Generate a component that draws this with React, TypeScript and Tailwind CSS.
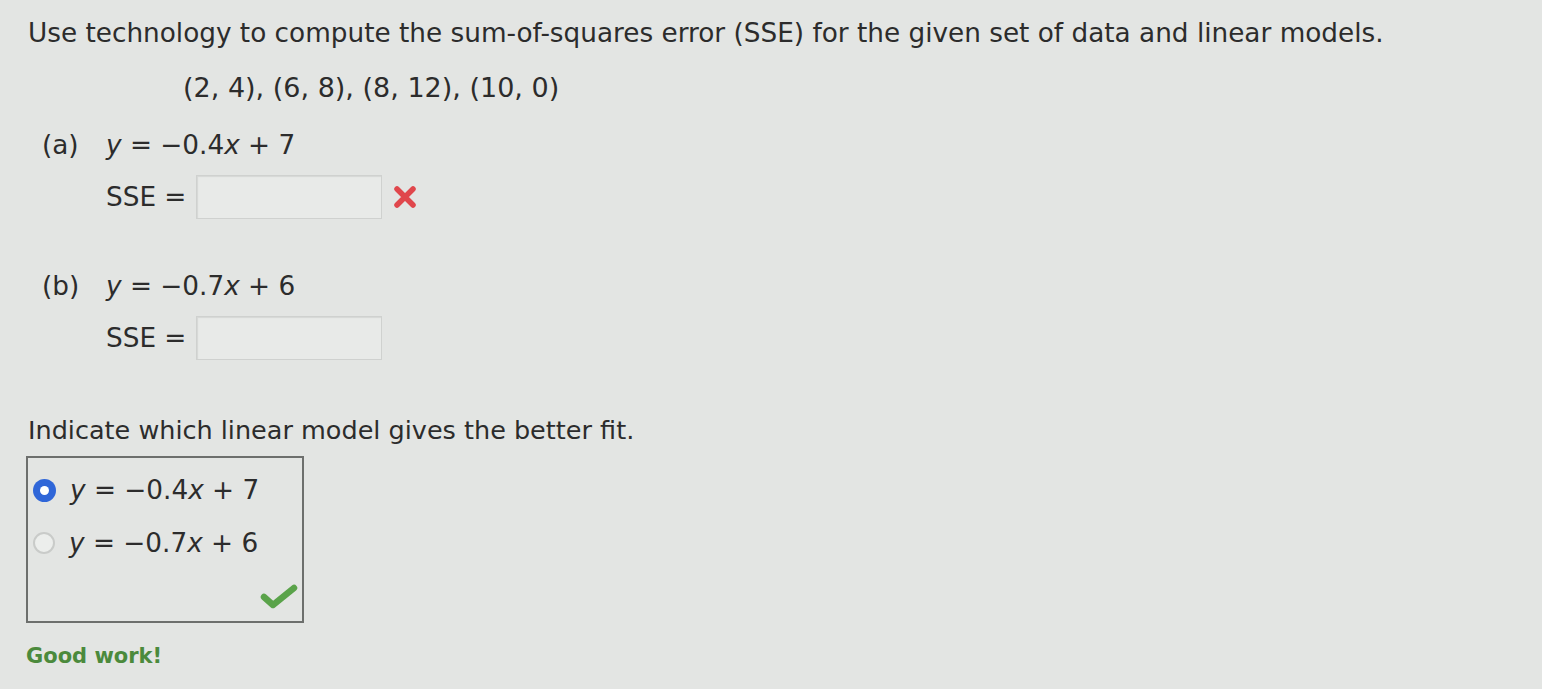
import React from 'react';

const Eq = ({ slope, b }: { slope: string; b: string }) => (
  <span className="whitespace-nowrap">
    <i>y</i> = −{slope}
    <i>x</i> + {b}
  </span>
);

const RedX = () => (
  <svg width="26" height="24" viewBox="0 0 26 24" className="shrink-0">
    <path d="M5 4 L21 20 M21 4 L5 20" stroke="#e0474c" strokeWidth="5.5" strokeLinecap="round" />
  </svg>
);

const Check = () => (
  <svg width="38" height="26" viewBox="0 0 38 26">
    <path d="M4 14 L13 22 L34 5" fill="none" stroke="#5aa34a" strokeWidth="6.5" strokeLinejoin="round" strokeLinecap="round" />
  </svg>
);

const Radio = ({ checked }: { checked?: boolean }) =>
  checked ? (
    <span className="w-[23px] h-[23px] rounded-full bg-[#2f66d8] flex items-center justify-center shrink-0">
      <span className="w-[9px] h-[9px] rounded-full bg-white" />
    </span>
  ) : (
    <span className="w-[22px] h-[22px] rounded-full border-2 border-[#c9cbc9] bg-[#eceeec] shrink-0" />
  );

const SseRow = ({ wrong }: { wrong?: boolean }) => (
  <div className="flex items-center">
    <span className="w-[90px]">SSE =</span>
    <span className="w-[186px] h-[44px] border border-[#cfd1cf] bg-[#e8eae8] shadow-[inset_1px_1px_1px_rgba(0,0,0,0.08)]" />
    {wrong && (
      <span className="ml-[10px]">
        <RedX />
      </span>
    )}
  </div>
);

const Part = ({ label, slope, b, wrong }: { label: string; slope: string; b: string; wrong?: boolean }) => (
  <div className="ml-[14px] flex">
    <span className="w-[64px]">{label}</span>
    <div className="flex flex-col gap-[17px]">
      <Eq slope={slope} b={b} />
      <SseRow wrong={wrong} />
    </div>
  </div>
);

export default function App() {
  return (
    <div
      className="w-[1542px] h-[689px] bg-[#e3e5e3] text-[#2c2c2c] text-[26.3px] leading-[26px] overflow-hidden pl-[28px] pt-[20px]"
      style={{ fontFamily: '"DejaVu Sans", Verdana, sans-serif' }}
    >
      <p className="whitespace-nowrap">
        Use technology to compute the sum-of-squares error (SSE) for the given set of data and linear models.
      </p>
      <p className="ml-[155px] mt-[29px] text-[27px]">(2, 4), (6, 8), (8, 12), (10, 0)</p>

      <div className="mt-[31px]">
        <Part label="(a)" slope="0.4" b="7" wrong />
      </div>
      <div className="mt-[54px]">
        <Part label="(b)" slope="0.7" b="6" />
      </div>

      <p className="mt-[57px] text-[25.5px]">Indicate which linear model gives the better fit.</p>

      <div className="mt-[13px] -ml-[2px] w-[278px] h-[167px] border-2 border-[#6d6f6d] flex flex-col pl-[5px] pt-[19px] pr-[4px]">
        <label className="flex items-center gap-[14px]">
          <Radio checked />
          <Eq slope="0.4" b="7" />
        </label>
        <label className="flex items-center gap-[14px] mt-[27px]">
          <Radio />
          <Eq slope="0.7" b="6" />
        </label>
        <div className="flex justify-end mt-[27px]">
          <Check />
        </div>
      </div>

      <p className="-ml-[2px] mt-[20px] font-bold text-[#4b8a3c] text-[21px]">Good work!</p>
    </div>
  );
}
